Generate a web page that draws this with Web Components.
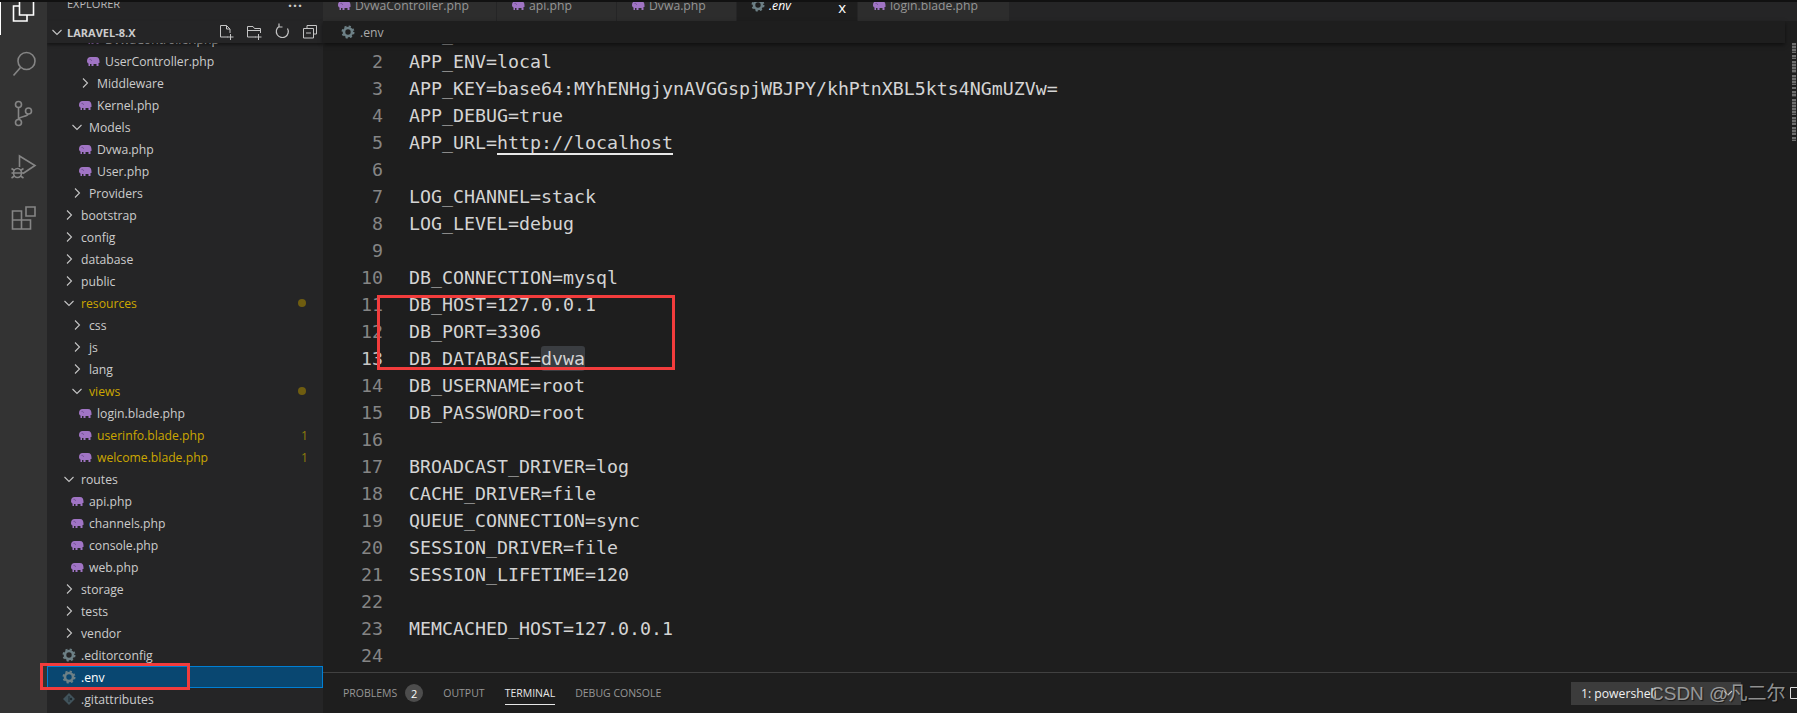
<!DOCTYPE html>
<html>
<head>
<meta charset="utf-8">
<title>.env - laravel-8.x</title>
<style>
  html, body { margin: 0; height: 100%; background: #1e1e1e; overflow: hidden; }
  body { font-family: "Open Sans", "Liberation Sans", sans-serif; }
</style>
</head>
<body>
<vs-window>
  <vs-activity-bar slot="activity"></vs-activity-bar>
  <vs-sidebar slot="sidebar">
    <tree-row level="3" icon="php">DvwaController.php</tree-row>
    <tree-row level="3" icon="php">UserController.php</tree-row>
    <tree-row level="2" icon="closed">Middleware</tree-row>
    <tree-row level="2" icon="php">Kernel.php</tree-row>
    <tree-row level="1" icon="open">Models</tree-row>
    <tree-row level="2" icon="php">Dvwa.php</tree-row>
    <tree-row level="2" icon="php">User.php</tree-row>
    <tree-row level="1" icon="closed">Providers</tree-row>
    <tree-row level="0" icon="closed">bootstrap</tree-row>
    <tree-row level="0" icon="closed">config</tree-row>
    <tree-row level="0" icon="closed">database</tree-row>
    <tree-row level="0" icon="closed">public</tree-row>
    <tree-row level="0" icon="open" git="dot" tone="dim">resources</tree-row>
    <tree-row level="1" icon="closed">css</tree-row>
    <tree-row level="1" icon="closed">js</tree-row>
    <tree-row level="1" icon="closed">lang</tree-row>
    <tree-row level="1" icon="open" git="dot" tone="dim">views</tree-row>
    <tree-row level="2" icon="php">login.blade.php</tree-row>
    <tree-row level="2" icon="php" git="1" tone="warn">userinfo.blade.php</tree-row>
    <tree-row level="2" icon="php" git="1" tone="warn">welcome.blade.php</tree-row>
    <tree-row level="0" icon="open">routes</tree-row>
    <tree-row level="1" icon="php">api.php</tree-row>
    <tree-row level="1" icon="php">channels.php</tree-row>
    <tree-row level="1" icon="php">console.php</tree-row>
    <tree-row level="1" icon="php">web.php</tree-row>
    <tree-row level="0" icon="closed">storage</tree-row>
    <tree-row level="0" icon="closed">tests</tree-row>
    <tree-row level="0" icon="closed">vendor</tree-row>
    <tree-row level="0" icon="gear">.editorconfig</tree-row>
    <tree-row level="0" icon="gear" selected>.env</tree-row>
    <tree-row level="0" icon="git">.gitattributes</tree-row>
  </vs-sidebar>
  <tab-strip slot="tabs">
    <editor-tab width="174" icon="php">DvwaController.php</editor-tab>
    <editor-tab width="120" icon="php">api.php</editor-tab>
    <editor-tab width="120" icon="php">Dvwa.php</editor-tab>
    <editor-tab width="121" icon="gear" active>.env</editor-tab>
    <editor-tab width="152" icon="php">login.blade.php</editor-tab>
  </tab-strip>
  <bread-crumb slot="crumb">.env</bread-crumb>
  <code-editor slot="editor"></code-editor>
  <bottom-panel slot="panel"></bottom-panel>
  <red-box slot="overlay" style="left:40px;top:663px;width:150px;height:27px"></red-box>
  <red-box slot="overlay" style="left:377px;top:295px;width:298px;height:75px"></red-box>
  <water-mark slot="overlay">CSDN @凡二尔</water-mark>
</vs-window>

<script>
const ICONS = {
  php: `<svg width="14" height="11" viewBox="0 0 14 11"><path fill="#a074c4" d="M1 5C1 2.500 2.500 1 4.500 1H10C12.500 1 13.500 3 13.500 5.500V7H12.500V10H10.500V8H7.500V10H5.500V8H4V10H2.500V7.500C1.500 7.200 1 6.300 1 5Z"/><path fill="none" stroke="#6c4c8c" stroke-width=".8" d="M3.500 3.500C4.500 3 5.500 3.500 5.500 5"/></svg>`,
  gear: `<svg width="14" height="14" viewBox="0 0 14 14"><circle cx="7" cy="7" r="4" fill="none" stroke="#6d8086" stroke-width="2.600"/><circle cx="7" cy="7" r="5.600" fill="none" stroke="#6d8086" stroke-width="1.800" stroke-dasharray="2.200 2.200"/></svg>`,
  git: `<svg width="14" height="14" viewBox="0 0 14 14"><path fill="#41535b" d="M7 1L13 7L7 13L1 7Z"/><path fill="#1f2a30" d="M6.500 4H7.500V10H6.500Z"/><circle cx="9" cy="7" r="1.200" fill="#1f2a30"/></svg>`,
  open: `<svg width="16" height="16" viewBox="0 0 16 16"><path fill="none" stroke="#c5c5c5" stroke-width="1.100" d="M3.500 6L8 10.500L12.500 6"/></svg>`,
  closed: `<svg width="16" height="16" viewBox="0 0 16 16"><path fill="none" stroke="#c5c5c5" stroke-width="1.100" d="M6 3.500L10.500 8L6 12.500"/></svg>`
};

class VsWindow extends HTMLElement {
  constructor() {
    super();
    this.attachShadow({ mode: 'open' }).innerHTML = `
      <style>
        :host { display: flex; flex-direction: column; width: 1797px; height: 713px; position: relative; overflow: hidden; }
        .strip { height: 2px; background: #111; flex: none; }
        .body { display: flex; flex: 1; min-height: 0; }
        .main { flex: 1; min-width: 0; display: flex; flex-direction: column; }
      </style>
      <div class="strip"></div>
      <div class="body">
        <slot name="activity"></slot>
        <slot name="sidebar"></slot>
        <div class="main">
          <slot name="tabs"></slot>
          <slot name="crumb"></slot>
          <slot name="editor"></slot>
          <slot name="panel"></slot>
        </div>
      </div>
      <slot name="overlay"></slot>`;
  }
}

class VsActivityBar extends HTMLElement {
  constructor() {
    super();
    this.attachShadow({ mode: 'open' }).innerHTML = `
      <style>
        :host { display: block; width: 47px; flex: none; background: #333; overflow: hidden; }
        .item { height: 52px; display: flex; align-items: center; justify-content: center; position: relative; }
        .item.first { margin-top: -18px; }
        .item.first::before { content: ''; position: absolute; left: 0; top: 0; bottom: 1px; width: 1px; background: #fff; }
        svg { fill: none; stroke: #858585; stroke-width: 1.600; }
        .first svg { stroke: #fff; }
      </style>
      <div class="item first"><svg width="36" height="36" viewBox="5.500 -8 36 36"><path d="M19 2V15H33V2M19 6H13V21H26.500V15"/></svg></div>
      <div class="item"><svg width="36" height="36" viewBox="5.500 42 36 36"><circle cx="26" cy="59" r="8.500"/><path d="M20 65.500L13 73.500"/></svg></div>
      <div class="item"><svg width="36" height="36" viewBox="5.500 95 36 36"><circle cx="18" cy="103.500" r="3"/><circle cx="28" cy="110" r="3"/><circle cx="18" cy="121.500" r="3"/><path d="M18 106.500V118.500M27.500 113C27 116 20 115 18 118"/></svg></div>
      <div class="item"><svg width="36" height="36" viewBox="5.500 147 36 36"><path d="M19 166V155L34.500 164.500L22.500 172.500"/><ellipse cx="17" cy="172" rx="4" ry="4.500"/><path d="M11 167.500L14 169.500M11 172H23M11 177L14 175M23 167.500L20 169.500M23 177L20 175"/></svg></div>
      <div class="item"><svg width="36" height="36" viewBox="5.500 200 36 36"><path d="M12 211H21V229H12ZM12 220H30V229H21M25.500 207H34.500V216H25.500Z"/></svg></div>`;
  }
}

class VsSidebar extends HTMLElement {
  constructor() {
    super();
    this.attachShadow({ mode: 'open' }).innerHTML = `
      <style>
        :host { display: flex; flex-direction: column; width: 276px; flex: none; background: #252526; color: #ccc; font-size: 12.200px; overflow: hidden; }
        .title { height: 19px; flex: none; overflow: hidden; display: flex; justify-content: space-between; padding: 0 20px 0 20px; box-sizing: border-box; }
        .title span { font-size: 11px; line-height: 16px; margin-top: -6px; color: #bbb; }
        .title b { font-weight: 700; font-size: 14px; line-height: 8px; letter-spacing: 1px; margin-top: -4px; }
        .section { height: 22px; flex: none; display: flex; align-items: center; position: relative; z-index: 1; box-shadow: 0 2px 3px rgba(0,0,0,.45); }
        .chev { width: 16px; margin-left: 2px; display: flex; }
        .section strong { font-size: 11px; font-weight: 700; margin-left: 2px; flex: 1; }
        .acts { display: flex; gap: 8px; padding-right: 3px; }
        .acts svg { fill: none; stroke: #c5c5c5; stroke-width: 1; display: block; }
        .list { flex: 1; min-height: 0; overflow: hidden; }
        .list div { margin-top: -15px; }
      </style>
      <div class="title"><span>EXPLORER</span><b>...</b></div>
      <div class="section">
        <span class="chev">${ICONS.open}</span>
        <strong>LARAVEL-8.X</strong>
        <div class="acts">
          <svg width="20" height="20" viewBox="0 0 20 20"><path d="M12 15H4.500V3.500H10.500L14 7V11M10.500 3.500V7H14M14.500 12V18M11.500 15H17.500"/></svg>
          <svg width="20" height="20" viewBox="0 0 20 20"><path d="M12 15H3.500V4.500H9L10.500 6.500H16.500V11M3.500 8.500H16.500M14.500 12V18M11.500 15H17.500"/></svg>
          <svg width="20" height="20" viewBox="0 0 20 20"><path d="M7 4.500A6 6 0 1 0 15.500 6.500M7 1.500V5H10.500" stroke-width="1.200"/></svg>
          <svg width="20" height="20" viewBox="0 0 20 20"><path d="M7 6V3.500H16.500V12H14M3.500 6.500H13.500V16H3.500ZM6 11H11"/></svg>
        </div>
      </div>
      <div class="list"><div><slot></slot></div></div>`;
  }
}

class TreeRow extends HTMLElement {
  connectedCallback() {
    const level = Number(this.getAttribute('level') || 0);
    const icon = this.getAttribute('icon');
    const git = this.getAttribute('git');
    this.attachShadow({ mode: 'open' }).innerHTML = `
      <style>
        :host { display: flex; align-items: center; height: 22px; box-sizing: border-box; white-space: nowrap; position: relative; padding-left: ${14 + level * 8}px; }
        :host([tone="dim"]), :host([tone="warn"]) { color: #cca700; }
        :host([selected]) { background: #094771; outline: 1px solid #007fd4; outline-offset: -1px; color: #fff; }
        .ico { width: 16px; height: 16px; display: flex; align-items: center; justify-content: center; margin-right: 4px; }
        .txt { flex: 1; }
        .badge { width: 19px; margin-right: 15px; color: #8f7d0c; display: flex; justify-content: flex-end; }
        .dot { width: 8px; height: 8px; border-radius: 50%; background: #6f5d10; margin-right: 2px; }
      </style>
      <span class="ico">${ICONS[icon] || ''}</span>
      <span class="txt"><slot></slot></span>
      ${git ? `<span class="badge">${git === 'dot' ? '<span class="dot"></span>' : git}</span>` : ''}`;
  }
}

class TabStrip extends HTMLElement {
  constructor() {
    super();
    this.attachShadow({ mode: 'open' }).innerHTML = `
      <style>
        :host { display: flex; height: 19px; flex: none; background: #252526; overflow: hidden; }
      </style>
      <slot></slot>`;
  }
}

class EditorTab extends HTMLElement {
  connectedCallback() {
    const active = this.hasAttribute('active');
    this.attachShadow({ mode: 'open' }).innerHTML = `
      <style>
        :host { display: flex; box-sizing: border-box; width: ${this.getAttribute('width')}px; height: 19px; flex: none; background: #2d2d2d; border-right: 1px solid #252526; color: #969696; font-size: 12.200px; padding-left: 14px; position: relative; overflow: hidden; white-space: nowrap; }
        :host([active]) { background: #1e1e1e; color: #fff; font-style: italic; }
        .row { display: flex; align-items: center; gap: 4px; height: 18px; margin-top: -6px; }
        .ico { width: 14px; display: flex; justify-content: center; }
        .x { position: absolute; right: 11px; top: -4px; font-size: 15px; line-height: 18px; font-style: normal; color: #fff; }
      </style>
      <div class="row"><span class="ico">${ICONS[this.getAttribute('icon')]}</span><slot></slot></div>
      ${active ? '<span class="x">x</span>' : ''}`;
  }
}

class BreadCrumb extends HTMLElement {
  constructor() {
    super();
    this.attachShadow({ mode: 'open' }).innerHTML = `
      <style>
        :host { display: flex; align-items: center; gap: 5px; height: 22px; flex: none; background: #1e1e1e; color: #a9a9a9; font-size: 12.200px; padding: 0 12px 0 18px; position: relative; z-index: 1; box-shadow: 0 2px 4px rgba(0,0,0,.5); margin-right: 12px; }
      </style>
      ${ICONS.gear}<slot></slot>`;
  }
}

const ENV_LINES = [
  'APP_NAME=Laravel', 'APP_ENV=local',
  'APP_KEY=base64:MYhENHgjynAVGGspjWBJPY/khPtnXBL5kts4NGmUZVw=', 'APP_DEBUG=true',
  'APP_URL=<u>http://localhost</u>', '', 'LOG_CHANNEL=stack', 'LOG_LEVEL=debug', '',
  'DB_CONNECTION=mysql', 'DB_HOST=127.0.0.1', 'DB_PORT=3306',
  'DB_DATABASE=<mark>dvwa</mark>', 'DB_USERNAME=root', 'DB_PASSWORD=root', '',
  'BROADCAST_DRIVER=log', 'CACHE_DRIVER=file', 'QUEUE_CONNECTION=sync',
  'SESSION_DRIVER=file', 'SESSION_LIFETIME=120', '', 'MEMCACHED_HOST=127.0.0.1', ''
];

class CodeEditor extends HTMLElement {
  constructor() {
    super();
    const rows = ENV_LINES.map((text, i) =>
      `<div class="line${i === 12 ? ' cur' : ''}"><span class="num">${i + 1}</span><span class="src">${text}</span></div>`).join('');
    const groups = [10, 4, 12, 10, 2, 6, 16, 8, 8, 4];
    const map = groups.map(h => `<i style="height:${h}px"></i>`).join('');
    this.attachShadow({ mode: 'open' }).innerHTML = `
      <style>
        :host { display: flex; flex: 1; min-height: 0; background: #1e1e1e; overflow: hidden; }
        .code { flex: 1; min-width: 0; font-family: "DejaVu Sans Mono", monospace; font-size: 18.270px; line-height: 27px; color: #d4d4d4; white-space: pre; }
        .inner { margin-top: -22px; }
        .line { display: flex; height: 27px; }
        .num { width: 60px; text-align: right; color: #858585; flex: none; }
        .cur .num { color: #c6c6c6; }
        .src { margin-left: 26px; }
        u { text-decoration: none; border-bottom: 2px solid #e8e8e8; }
        mark { background: #3a3d41; color: inherit; border-radius: 3px; padding: 2px 0; }
        .map { width: 4px; margin: 0 1px 0 7px; display: flex; flex-direction: column; gap: 2px; }
        .map i { display: block; background: repeating-linear-gradient(#6e6e6e 0 2px, #3c3c3c 2px 3px); }
      </style>
      <div class="code"><div class="inner">${rows}</div></div>
      <div class="map">${map}</div>`;
  }
}

class BottomPanel extends HTMLElement {
  constructor() {
    super();
    this.attachShadow({ mode: 'open' }).innerHTML = `
      <style>
        :host { display: flex; align-items: center; height: 41px; flex: none; box-sizing: border-box; border-top: 1px solid #414141; background: #1e1e1e; padding-left: 20px; font-size: 10.500px; color: #969696; overflow: hidden; white-space: nowrap; }
        .tab { display: flex; align-items: center; gap: 8px; margin-right: 20px; height: 100%; position: relative; }
        .on { color: #e7e7e7; }
        .on::after { content: ''; position: absolute; left: 0; right: 0; bottom: 8px; height: 1px; background: #e7e7e7; }
        .badge { width: 18px; height: 18px; border-radius: 50%; background: #4d4d4d; color: #fff; display: flex; align-items: center; justify-content: center; font-size: 11px; }
        .sel { margin-left: auto; width: 170px; height: 23px; background: #3c3c3c; color: #f0f0f0; font-size: 12.200px; display: flex; align-items: center; justify-content: space-between; padding: 0 8px 0 10px; box-sizing: border-box; }
        .sel svg { fill: none; stroke: #ccc; stroke-width: 1.100; }
        .split { margin-left: 49px; width: 7px; height: 12px; flex: none; display: block; }
      </style>
      <div class="tab">PROBLEMS <span class="badge">2</span></div>
      <div class="tab">OUTPUT</div>
      <div class="tab on">TERMINAL</div>
      <div class="tab">DEBUG CONSOLE</div>
      <div class="sel">1: powershell <svg width="10" height="10" viewBox="0 0 10 10"><path d="M1 3L5 7L9 3"/></svg></div>
      <svg class="split" viewBox="0 0 7 12"><path d="M7 .500H.500V11.500H7" fill="none" stroke="#ddd"/></svg>`;
  }
}

class RedBox extends HTMLElement {
  constructor() {
    super();
    this.attachShadow({ mode: 'open' }).innerHTML = `
      <style>
        :host { display: block; position: absolute; box-sizing: border-box; border: 3px solid #f23c3c; pointer-events: none; z-index: 5; }
      </style>`;
  }
}

class WaterMark extends HTMLElement {
  constructor() {
    super();
    this.attachShadow({ mode: 'open' }).innerHTML = `
      <style>
        :host { display: block; position: absolute; left: 1650px; top: 682px; z-index: 6; font: 19px/24px "Liberation Sans", "Noto Sans CJK SC", sans-serif; color: rgba(225,225,225,.62); text-shadow: 1px 1px 1px rgba(0,0,0,.6); white-space: nowrap; }
      </style>
      <slot></slot>`;
  }
}

customElements.define('vs-window', VsWindow);
customElements.define('vs-activity-bar', VsActivityBar);
customElements.define('vs-sidebar', VsSidebar);
customElements.define('tree-row', TreeRow);
customElements.define('tab-strip', TabStrip);
customElements.define('editor-tab', EditorTab);
customElements.define('bread-crumb', BreadCrumb);
customElements.define('code-editor', CodeEditor);
customElements.define('bottom-panel', BottomPanel);
customElements.define('red-box', RedBox);
customElements.define('water-mark', WaterMark);
</script>
</body>
</html>
